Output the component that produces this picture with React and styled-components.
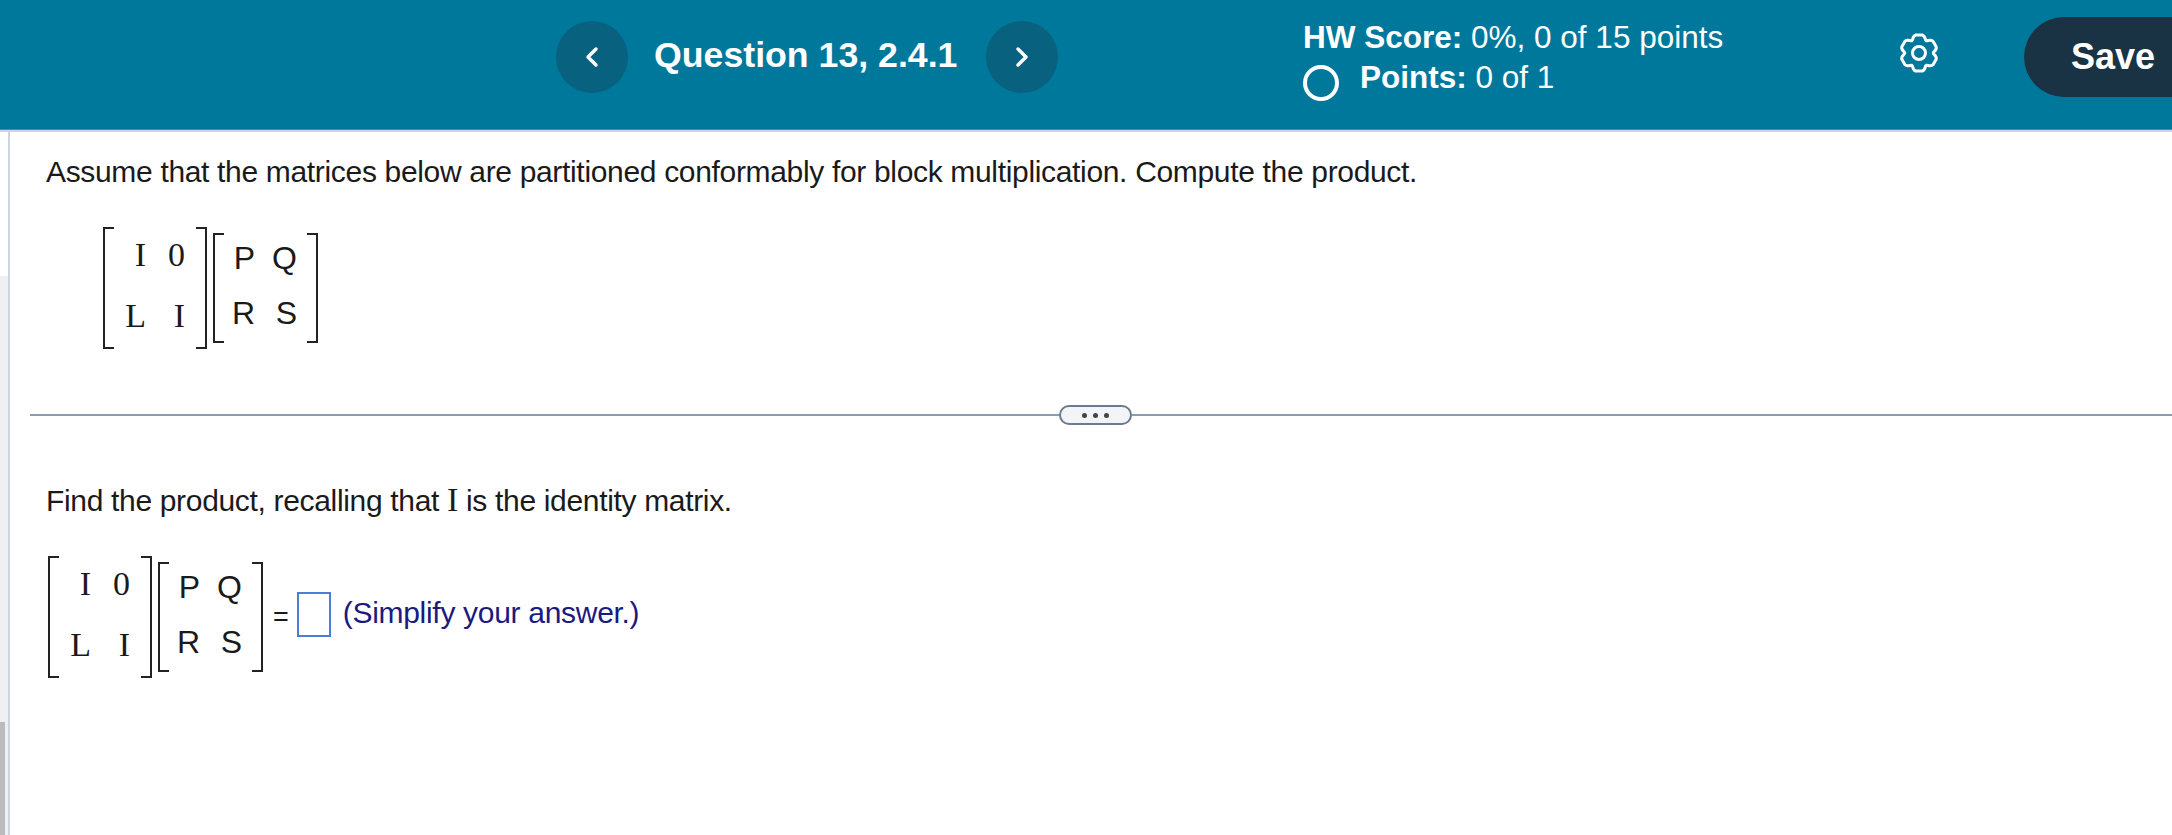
import React from "react";
import styled, { createGlobalStyle } from "styled-components";

const Global = createGlobalStyle`
  html, body { margin: 0; padding: 0; background: #fff; }
  body { font-family: "Liberation Sans", Arial, sans-serif; color: #1a1a1a; }
`;

const Page = styled.div`
  width: 2172px;
  height: 835px;
  overflow: hidden;
  display: flex;
  flex-direction: column;
`;

const Header = styled.header`
  height: 129px;
  flex: none;
  background: #00789c;
  border-bottom: 1px solid #3a90aa;
  display: flex;
  align-items: flex-start;
  color: #fff;
`;

const NavGroup = styled.div`
  display: flex;
  align-items: center;
  margin: 21px 0 0 556px;
  height: 72px;
  width: 502px;
`;

const RoundButton = styled.button`
  width: 72px;
  height: 72px;
  flex: none;
  padding: 0;
  border: none;
  border-radius: 50%;
  background: #08617f;
  display: flex;
  align-items: center;
  justify-content: center;
`;

const QuestionTitle = styled.div`
  font-size: 35.7px;
  font-weight: 700;
  margin: 0 auto 3px 26px;
  white-space: nowrap;
`;

const Score = styled.div`
  margin: 18px 0 0 245px;
  width: 596px;
  font-size: 31.5px;
  line-height: 38px;
`;

const PointsRow = styled.div`
  display: flex;
  align-items: flex-start;
  margin-top: 2px;
`;

const Ring = styled.span`
  width: 36px;
  height: 36px;
  box-sizing: border-box;
  border: 4px solid #fff;
  border-radius: 50%;
  margin: 7px 21px 0 0;
`;

const GearSlot = styled.div`
  width: 125px;
  margin-top: 33px;
  flex: none;
  display: flex;
`;

const SaveButton = styled.button`
  width: 148px;
  height: 80px;
  margin-top: 17px;
  flex: none;
  border: none;
  border-radius: 40px 0 0 40px;
  background: #1a3344;
  color: #fff;
  font: 700 36px "Liberation Sans", Arial, sans-serif;
  padding: 0 0 0 47px;
  text-align: left;
`;

const Body = styled.div`
  flex: 1;
  display: flex;
  border-top: 2px solid #ccd5e3;
  min-height: 0;
`;

const Rail = styled.div`
  width: 8px;
  flex: none;
  display: flex;
  flex-direction: column;
  border-right: 2px solid #ccd5e3;
`;

const RailTop = styled.div`
  height: 144px;
  flex: none;
  background: #fff;
`;

const RailTrack = styled.div`
  flex: 1;
  background: #f0f0f0;
  padding-top: 446px;
`;

const RailThumb = styled.div`
  width: 5px;
  height: 120px;
  background: #bbb;
`;

const Main = styled.main`
  flex: 1;
  min-width: 0;
  display: flex;
  flex-direction: column;
`;

const Prose = styled.p`
  margin: ${(p) => p.$top}px 0 0 36px;
  font-size: 30px;
  letter-spacing: -0.33px;
  line-height: 36px;
  white-space: nowrap;
`;

const SerifI = styled.span`
  font-family: "Liberation Serif", serif;
  font-size: 34px;
`;

const MathRow = styled.div`
  display: flex;
  align-items: center;
  margin: ${(p) => p.$top}px 0 0 ${(p) => p.$left}px;
`;

const Matrix = styled.div`
  display: flex;
  align-items: stretch;
  margin-right: ${(p) => p.$gap || 0}px;
`;

const Bracket = styled.span`
  width: 9px;
  flex: none;
  border: 2px solid #222;
  ${(p) => (p.$side === "left" ? "border-right: none;" : "border-left: none;")}
`;

const Cells = styled.div`
  display: grid;
  grid-template-columns: ${(p) => p.$cols};
  grid-auto-rows: ${(p) => p.$row}px;
  align-items: center;
  justify-items: end;
`;

const Cell = styled.span`
  font-family: ${(p) => (p.$serif ? '"Liberation Serif", serif' : '"Liberation Sans", sans-serif')};
  font-size: ${(p) => (p.$serif ? 34 : 32)}px;
  line-height: 1;
  padding-bottom: 6px;
`;

const Equals = styled.span`
  font-size: 27px;
  margin: 0 8px 0 10px;
`;

const AnswerBox = styled.span`
  width: 34px;
  height: 45px;
  margin-bottom: 6px;
  box-sizing: border-box;
  border: 2px solid #4a7fd6;
  background: #fff;
`;

const Hint = styled.span`
  font-size: 30px;
  letter-spacing: -0.3px;
  color: #1a1a80;
  margin: 0 0 8px 12px;
  white-space: nowrap;
`;

const Divider = styled.div`
  display: flex;
  align-items: center;
  margin: ${(p) => p.$top}px 0 0 20px;
`;

const DividerLine = styled.span`
  flex: ${(p) => (p.$fixed ? `0 0 ${p.$fixed}px` : 1)};
  height: 2px;
  background: #8f9bb0;
`;

const Pill = styled.button`
  width: 73px;
  height: 20px;
  padding: 0;
  flex: none;
  border: 2px solid #6b7b90;
  border-radius: 10px;
  background: #f2f4f7;
  display: flex;
  align-items: center;
  justify-content: center;
  gap: 6px;
`;

const Dot = styled.span`
  width: 5px;
  height: 5px;
  border-radius: 50%;
  background: #444;
`;

const Chevron = ({ dir }) => (
  <svg width="14" height="22" viewBox="0 0 14 22">
    <polyline
      points={dir === "left" ? "11,3 3,11 11,19" : "3,3 11,11 3,19"}
      fill="none"
      stroke="#fff"
      strokeWidth="3.4"
      strokeLinecap="round"
      strokeLinejoin="round"
    />
  </svg>
);

// six lobed cog outline, pointy side up
const polar = (deg, r) => {
  const a = (deg * Math.PI) / 180;
  return `${(20 + r * Math.cos(a)).toFixed(2)} ${(20 + r * Math.sin(a)).toFixed(2)}`;
};

const cogPath = () => {
  const rIn = 14.2;
  const rOut = 18.3;
  let d = `M${polar(-120, rIn)}`;
  for (let k = 0; k < 6; k++) {
    const a = -90 + k * 60;
    d += ` C${polar(a - 24, rIn)} ${polar(a - 22, rOut)} ${polar(a - 10, rOut)}`;
    d += ` L${polar(a + 10, rOut)}`;
    d += ` C${polar(a + 22, rOut)} ${polar(a + 24, rIn)} ${polar(a + 30, rIn)}`;
  }
  return d + "Z";
};

const Gear = () => (
  <svg width="40" height="40" viewBox="0 0 40 40" fill="none" stroke="#fff" strokeWidth="3">
    <path d={cogPath()} strokeLinejoin="round" />
    <circle cx="20" cy="20" r="6.5" />
  </svg>
);

const BlockMatrix = ({ cols, row, gap, items, serif }) => (
  <Matrix $gap={gap}>
    <Bracket $side="left" />
    <Cells $cols={cols} $row={row}>
      {items.map((t, i) => (
        <Cell key={i} $serif={serif}>{t}</Cell>
      ))}
    </Cells>
    <Bracket $side="right" />
  </Matrix>
);

const Product = () => (
  <>
    <BlockMatrix cols="32px 39px 11px" row={61} gap={6} items={["I", "0", "", "L", "I", ""]} serif />
    <BlockMatrix cols="31px 42px 10px" row={55} items={["P", "Q", "", "R", "S", ""]} />
  </>
);

export default function App() {
  return (
    <Page>
      <Global />
      <Header>
        <NavGroup>
          <RoundButton><Chevron dir="left" /></RoundButton>
          <QuestionTitle>Question 13, 2.4.1</QuestionTitle>
          <RoundButton><Chevron dir="right" /></RoundButton>
        </NavGroup>
        <Score>
          <div><b>HW Score:</b> 0%, 0 of 15 points</div>
          <PointsRow>
            <Ring />
            <div><b>Points:</b> 0 of 1</div>
          </PointsRow>
        </Score>
        <GearSlot>
          <Gear />
        </GearSlot>
        <SaveButton>Save</SaveButton>
      </Header>
      <Body>
        <Rail>
          <RailTop />
          <RailTrack>
            <RailThumb />
          </RailTrack>
        </Rail>
        <Main>
          <Prose $top={22}>Assume that the matrices below are partitioned conformably for block multiplication. Compute the product.</Prose>
          <MathRow $top={37} $left={93}>
            <Product />
          </MathRow>
          <Divider $top={56}>
            <DividerLine $fixed={1029} />
            <Pill><Dot /><Dot /><Dot /></Pill>
            <DividerLine />
          </Divider>
          <Prose $top={57}>
            Find the product, recalling that <SerifI>I</SerifI> is the identity matrix.
          </Prose>
          <MathRow $top={37} $left={38}>
            <Product />
            <Equals>=</Equals>
            <AnswerBox />
            <Hint>(Simplify your answer.)</Hint>
          </MathRow>
        </Main>
      </Body>
    </Page>
  );
}
